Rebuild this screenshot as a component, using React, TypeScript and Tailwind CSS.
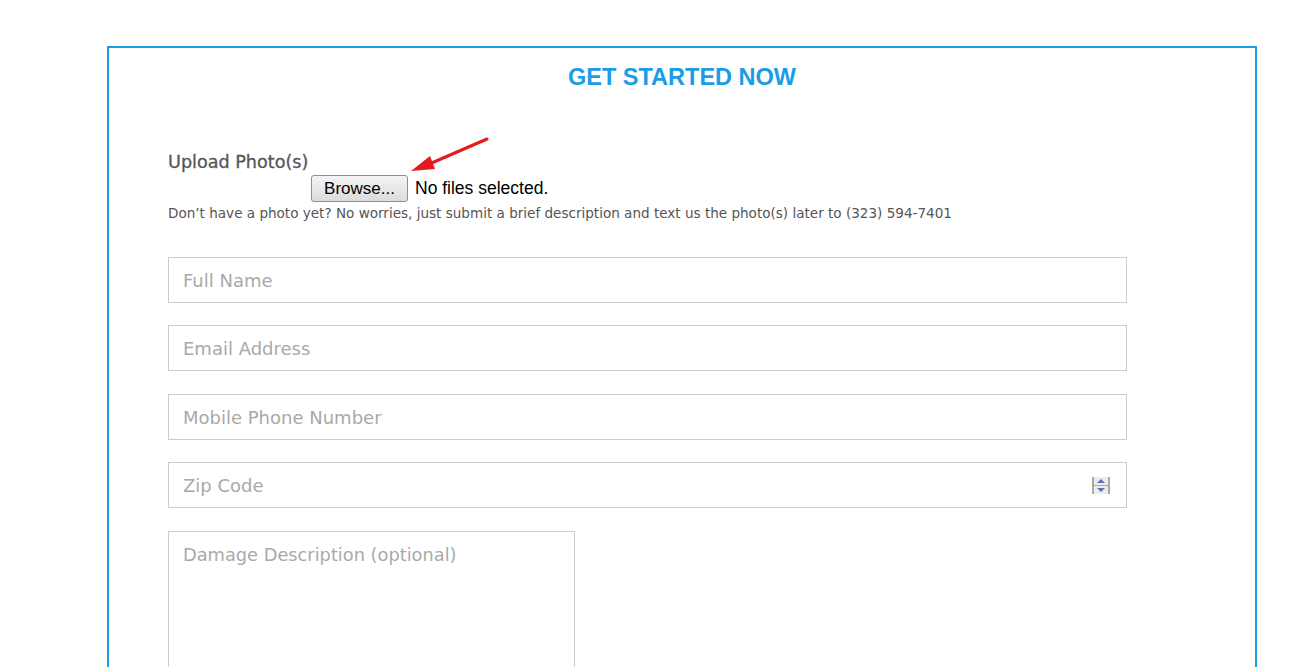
import React from 'react';

const font = { fontFamily: '"DejaVu Sans", "Open Sans", sans-serif' };
const arial = { fontFamily: '"Liberation Sans", Arial, sans-serif' };

const Field: React.FC<{ placeholder: string; spinner?: boolean }> = ({ placeholder, spinner }) => (
  <div className="relative w-[959px] h-[46px] border border-[#cccccc] bg-white flex items-center">
    <input
      placeholder={placeholder}
      className="w-full h-full px-[14px] text-[18px] text-[#555] placeholder:text-[#a9a9a9] outline-none bg-transparent"
      style={font}
    />
    {spinner && (
      <div className="absolute right-[16px] top-[14px] w-[18px] h-[17px] flex flex-col border-x-2 border-[#a9a9a9]">
        <div className="flex-1 bg-[#ececec] flex items-center justify-center border-b border-[#a9a9a9]">
          <div className="w-0 h-0 border-x-[4px] border-x-transparent border-b-[4px] border-b-[#5a73b8]" />
        </div>
        <div className="flex-1 bg-[#ececec] flex items-center justify-center">
          <div className="w-0 h-0 border-x-[4px] border-x-transparent border-t-[4px] border-t-[#5a73b8]" />
        </div>
      </div>
    )}
  </div>
);

export default function App() {
  return (
    <div className="min-h-[667px] bg-white pt-[46px]">
      <div className="relative ml-[107px] w-[1150px] h-[700px] border-2 border-[#1a9de6] px-[59px]">
        <h1
          className="text-center text-[23.5px] leading-[32px] font-bold text-[#1a9de6] pt-[13px] -mx-[59px]"
          style={arial}
        >
          GET STARTED NOW
        </h1>

        <div className="mt-[57px]">
          <div className="text-[17.6px] leading-[24px] text-[#555]" style={{ ...font, WebkitTextStroke: '0.3px #555' }}>
            Upload Photo(s)
          </div>
          <div className="flex items-center mt-[1px] ml-[143px] gap-[7px]">
            <button
              className="h-[27px] w-[97px] border border-[#8f8f8f] rounded-[3px] bg-gradient-to-b from-[#f4f4f4] to-[#dcdcdc] text-[17px] text-black"
              style={arial}
            >
              Browse...
            </button>
            <span className="text-[17.5px] text-black" style={arial}>
              No files selected.
            </span>
          </div>
          <p className="text-[13.55px] leading-[20px] text-[#555] mt-[1px]" style={font}>
            Don’t have a photo yet? No worries, just submit a brief description and text us the photo(s) later to (323) 594-7401
          </p>
        </div>

        <div className="flex flex-col gap-[22px] mt-[34px]">
          <Field placeholder="Full Name" />
          <Field placeholder="Email Address" />
          <div className="mt-[1px]">
            <Field placeholder="Mobile Phone Number" />
          </div>
          <Field placeholder="Zip Code" spinner />
          <textarea
            placeholder="Damage Description (optional)"
            className="mt-[1px] w-[407px] h-[160px] border border-[#cccccc] px-[14px] py-[10px] text-[17.8px] text-[#555] placeholder:text-[#a9a9a9] outline-none resize-none"
            style={font}
          />
        </div>

        <svg className="absolute left-[300px] top-[88px]" width="90" height="40" viewBox="0 0 90 40">
          <line x1="78" y1="3" x2="18" y2="29" stroke="#e8191c" strokeWidth="3" strokeLinecap="round" />
          <polygon points="2,35 21,20 26,33" fill="#e8191c" />
        </svg>
      </div>
    </div>
  );
}
